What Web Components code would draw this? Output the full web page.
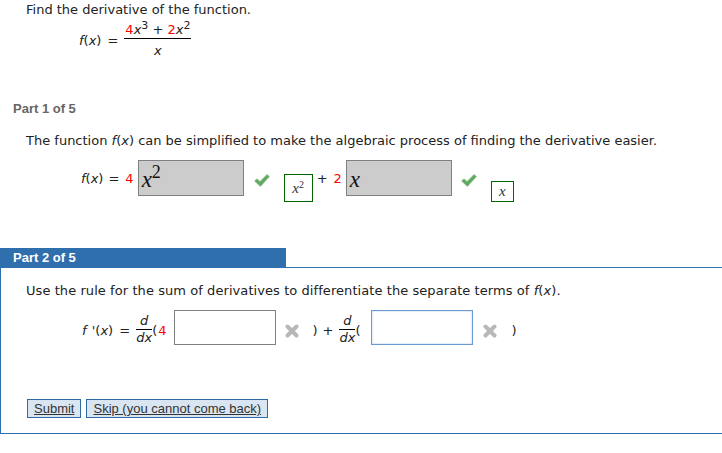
<!DOCTYPE html>
<html>
<head>
<meta charset="utf-8">
<style>
  html, body { margin: 0; padding: 0; background: #fff; }
  body { width: 722px; height: 453px; overflow: hidden; font-family: "DejaVu Sans", Verdana, sans-serif; font-size: 13px; color: #222; }
  .red { color: #f00; }
  i { font-style: italic; }
  sup { font-size: 11px; line-height: 0; }
  answer-box sup { font: normal 18px/0 "Liberation Serif", serif; vertical-align: 9px; }
  tile-box sup { font: normal 10px/0 "Liberation Serif", serif; vertical-align: 5px; }
  answer-box i, tile-box i { font-family: "Liberation Serif", serif; font-style: italic; }
  /* text in the second row sits a little under the middle of the inputs */
  math-row[slot=deriv] { height: 35px; }
  math-row[slot=deriv] > span, math-row[slot=deriv] > mark-cross { margin-top: 6px; }
  math-row[slot=deriv] > math-frac { margin-top: 4px; }
</style>
</head>
<body>
<script>
// small helper so every element is just a shadow root + style
function define(name, css, html) {
  customElements.define(name, class extends HTMLElement {
    constructor() {
      super();
      this.attachShadow({ mode: 'open' }).innerHTML = `<style>${css}</style>${html}`;
    }
  });
}

define('math-frac', `
  :host { display: inline-flex; flex-direction: column; align-items: stretch; text-align: center; vertical-align: middle; line-height: 16px; }
  .top { border-bottom: 1px solid #000; padding: 0 var(--frac-pad, 2.5px); }
  .bottom { padding-top: var(--frac-gap, 0); }
`, `<div class="top"><slot name="top"></slot></div><div class="bottom"><slot name="bottom"></slot></div>`);

define('part-label', `
  :host { display: block; font: bold 13px/16px "Liberation Sans", Arial, sans-serif; color: #666; padding-left: 13px; }
`, `<slot></slot>`);

define('part-header', `
  :host { display: block; width: 273px; height: 19px; padding-left: 13px; background: #2f6fad; color: #fff; font: bold 13px/19px "Liberation Sans", Arial, sans-serif; }
`, `<slot></slot>`);

define('answer-box', `
  :host { display: inline-block; box-sizing: border-box; width: 106px; height: 36px; border: 1px solid #808080; background: #ccc; color: #111; font: italic 23px/30px "Liberation Serif", serif; padding: 4px 0 0 3px; overflow: hidden; }
  :host([empty]) { background: #fff; width: 102px; height: 35px; }
  :host([focused]) { border: 1px solid #6c9bd2; box-shadow: inset 0 0 2px #9ec2e8; }
`, `<slot></slot>`);

define('tile-box', `
  :host { display: inline-flex; align-items: center; justify-content: center; box-sizing: border-box; border: 1px solid #060; color: #333; font: italic 15px "Liberation Serif", serif; background: #fff; width: var(--w, 29px); height: var(--h, 28px); }
`, `<span><slot></slot></span>`);

define('mark-check', `
  :host { display: inline-block; width: 16px; height: 13px; }
  svg { display: block; }
`, `<svg width="16" height="13" viewBox="0 0 16 13"><path d="M0.5 7 L3 4.8 L6 7.4 L13 0.5 L15.5 2.6 L6.4 12.5 Z" fill="#62a862" stroke="#8cc48c" stroke-width=".6"/></svg>`);

define('mark-cross', `
  :host { display: inline-block; width: 14px; height: 14px; }
  svg { display: block; }
`, `<svg width="14" height="14" viewBox="0 0 14 14"><path d="M2.5 2.5 L11.5 11.5 M11.5 2.5 L2.5 11.5" stroke="#b8b8b8" stroke-width="4" stroke-linecap="round"/></svg>`);

define('form-button', `
  :host { display: inline-block; box-sizing: border-box; height: 19px; padding: 0 6px; border: 1px solid #2f6aa5; background: #d9e5f1; color: #333; font: 13px/17px "Liberation Sans", Arial, sans-serif; text-decoration: underline; white-space: pre; }
`, `<slot></slot>`);

define('math-row', `
  :host { display: flex; align-items: center; white-space: nowrap; }
`, `<slot></slot>`);

define('question-page', `
  :host { display: block; }
  .title { padding: 2px 0 0 26px; line-height: 15px; }
  .formula { padding: 5px 0 0 79px; height: 68px; box-sizing: border-box; }
  .part1 { padding-top: 16px; }
  .lead { padding: 16px 0 0 26px; line-height: 16px; }
  .simplify { padding: 11px 0 0 81px; height: 99px; box-sizing: border-box; }
  .panel { border-left: 1px solid #2f6fad; border-bottom: 1px solid #2f6fad; height: 167px; box-sizing: border-box; }
  .rule { border-top: 1px solid #2f6fad; }
  .use { padding: 15px 0 0 25px; line-height: 16px; letter-spacing: .07px; }
  .deriv { padding: 11px 0 0 81px; }
  .buttons { display: flex; gap: 5px; padding: 54px 0 0 26px; }
`, `
  <div class="title"><slot name="title"></slot></div>
  <div class="formula"><slot name="formula"></slot></div>
  <div class="part1"><slot name="part1"></slot></div>
  <div class="lead"><slot name="lead"></slot></div>
  <div class="simplify"><slot name="simplify"></slot></div>
  <slot name="head2"></slot>
  <div class="panel"><div class="rule"></div>
    <div class="use"><slot name="use"></slot></div>
    <div class="deriv"><slot name="deriv"></slot></div>
    <div class="buttons"><slot name="buttons"></slot></div>
  </div>
`);
</script>

<question-page>
  <span slot="title">Find the derivative of the function.</span>

  <math-row slot="formula">
    <span><i>f</i>(<i>x</i>)</span>
    <span style="margin-left:6px">=</span>
    <math-frac style="--frac-pad:1px;--frac-gap:4px;margin-left:6px">
      <span slot="top"><span class="red">4</span><i>x</i><sup>3</sup> + <span class="red">2</span><i>x</i><sup>2</sup></span>
      <i slot="bottom">x</i>
    </math-frac>
  </math-row>

  <part-label slot="part1">Part 1 of 5</part-label>

  <span slot="lead">The function <i>f</i>(<i>x</i>) can be simplified to make the algebraic process of finding the derivative easier.</span>

  <math-row slot="simplify" style="align-items:flex-start">
    <span style="margin-top:11px"><i>f</i>(<i>x</i>)<span style="margin-left:5px">=</span><span class="red" style="margin-left:6px">4</span></span>
    <answer-box style="margin-left:4px"><i>x</i><sup>2</sup></answer-box>
    <mark-check style="margin:14px 0 0 10px"></mark-check>
    <tile-box style="margin:14px 0 0 14px"><i>x</i><sup>2</sup></tile-box>
    <span style="margin:11px 0 0 4px">+<span class="red" style="margin-left:6px">2</span></span>
    <answer-box style="margin-left:4px"><i>x</i></answer-box>
    <mark-check style="margin:14px 0 0 9px"></mark-check>
    <tile-box style="margin:21px 0 0 14px;--w:23px;--h:21px"><i>x</i></tile-box>
  </math-row>

  <part-header slot="head2">Part 2 of 5</part-header>

  <span slot="use">Use the rule for the sum of derivatives to differentiate the separate terms of <i>f</i>(<i>x</i>).</span>

  <math-row slot="deriv">
    <span><i>f</i><span style="margin-left:1px"> '</span>(<i>x</i>)<span style="margin-left:2px"> =</span></span>
    <math-frac style="margin-left:6px"><i slot="top">d</i><i slot="bottom">dx</i></math-frac>
    <span>(<span class="red" style="margin-left:1px">4</span></span>
    <answer-box empty style="margin-left:7px"></answer-box>
    <mark-cross style="margin-left:9px"></mark-cross>
    <span style="margin-left:14px">)<span style="margin-left:5px">+</span></span>
    <math-frac style="margin-left:6px"><i slot="top">d</i><i slot="bottom">dx</i></math-frac>
    <span>(</span>
    <answer-box empty focused style="margin-left:10px"></answer-box>
    <mark-cross style="margin-left:10px"></mark-cross>
    <span style="margin-left:15px">)</span>
  </math-row>

  <form-button slot="buttons">Submit</form-button>
  <form-button slot="buttons">Skip (you cannot come back)</form-button>
</question-page>
</body>
</html>
